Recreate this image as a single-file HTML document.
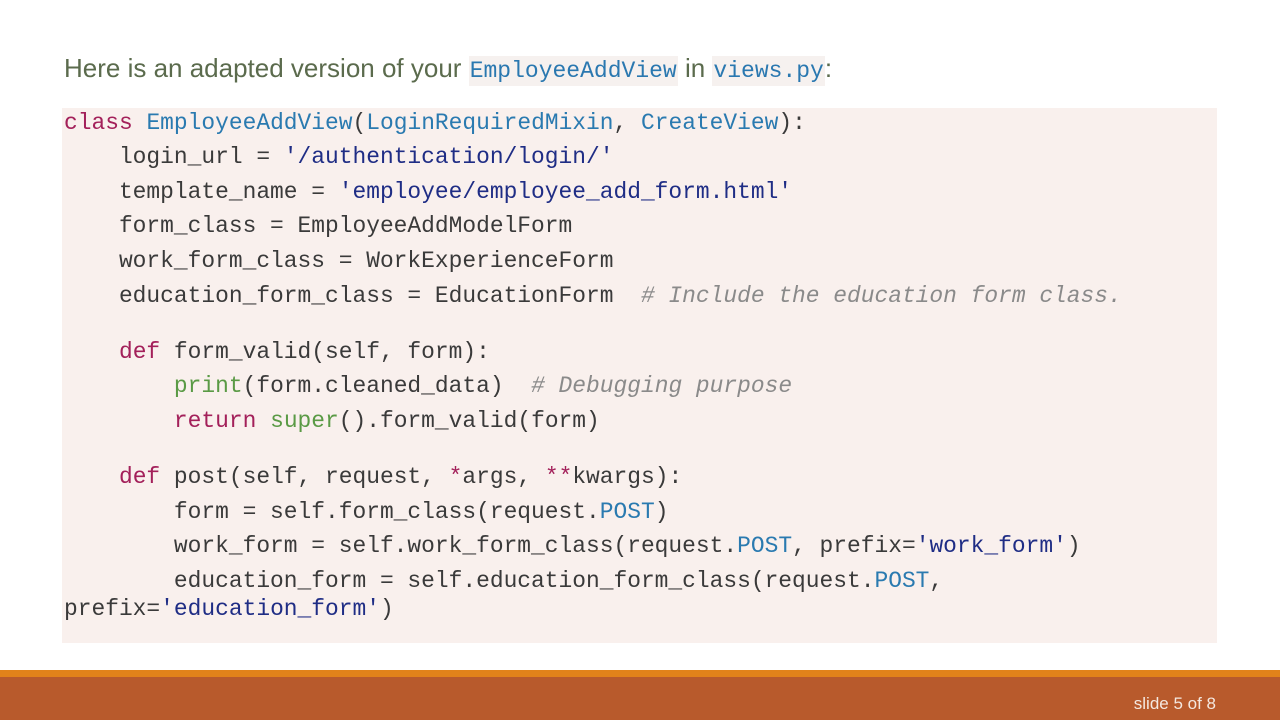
<!DOCTYPE html>
<html><head><meta charset="utf-8"><style>
body{margin:0;width:1280px;height:720px;background:#fff;position:relative;overflow:hidden;font-family:"Liberation Sans",sans-serif}
.h{position:absolute;left:64px;top:53px;font-size:26px;color:#5b6b4d;white-space:pre}
.h code{font-family:"Liberation Mono",monospace;font-size:23px;color:#2a78b0;background:#f6f1ef;padding:2px 1px}
.box{position:absolute;left:62px;top:108px;width:1155px;height:535px;background:#f9f0ed}
.l{position:absolute;left:64px;font-family:"Liberation Mono",monospace;font-size:22.9px;color:#3a3a3a;white-space:pre;line-height:28px}
.k{color:#a3205a}.c{color:#2a7ab0}.s{color:#1f2d85}.m{color:#8a8a8a;font-style:italic}.g{color:#5a9a45}.p{color:#2a7ab0}
.o1{position:absolute;left:0;top:670px;width:1280px;height:7px;background:#e2821a}
.o2{position:absolute;left:0;top:677px;width:1280px;height:43px;background:#b85a2c}
.sl{position:absolute;right:64px;top:694px;color:#f4e8e0;font-size:17px}
</style></head><body>
<div class="h">Here is an adapted version of your <code>EmployeeAddView</code> in <code>views.py</code>:</div>
<div class="box"></div>
<div class="l" style="top:109px"><span class="k">class</span> <span class="c">EmployeeAddView</span>(<span class="c">LoginRequiredMixin</span>, <span class="c">CreateView</span>):</div>
<div class="l" style="top:143px">    login_url = <span class="s">'/authentication/login/'</span></div>
<div class="l" style="top:178px">    template_name = <span class="s">'employee/employee_add_form.html'</span></div>
<div class="l" style="top:212px">    form_class = EmployeeAddModelForm</div>
<div class="l" style="top:247px">    work_form_class = WorkExperienceForm</div>
<div class="l" style="top:282px">    education_form_class = EducationForm  <span class="m"># Include the education form class.</span></div>
<div class="l" style="top:338px">    <span class="k">def</span> form_valid(self, form):</div>
<div class="l" style="top:372px">        <span class="g">print</span>(form.cleaned_data)  <span class="m"># Debugging purpose</span></div>
<div class="l" style="top:407px">        <span class="k">return</span> <span class="g">super</span>().form_valid(form)</div>
<div class="l" style="top:463px">    <span class="k">def</span> post(self, request, <span class="k">*</span>args, <span class="k">**</span>kwargs):</div>
<div class="l" style="top:498px">        form = self.form_class(request.<span class="p">POST</span>)</div>
<div class="l" style="top:532px">        work_form = self.work_form_class(request.<span class="p">POST</span>, prefix=<span class="s">'work_form'</span>)</div>
<div class="l" style="top:567px">        education_form = self.education_form_class(request.<span class="p">POST</span>,</div>
<div class="l" style="top:595px">prefix=<span class="s">'education_form'</span>)</div>
<div class="o1"></div><div class="o2"></div>
<div class="sl">slide 5 of 8</div>
</body></html>
